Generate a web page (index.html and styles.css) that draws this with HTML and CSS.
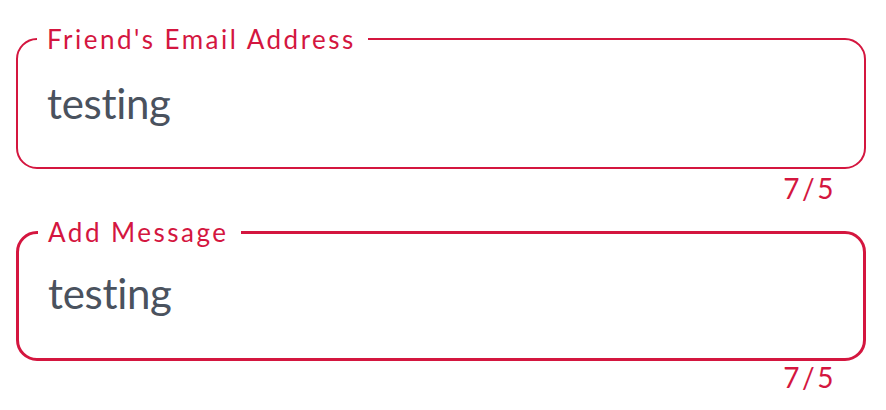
FILE: index.html
```html
<!DOCTYPE html>
<html lang="en">
<head>
<meta charset="utf-8">
<title>Invite a friend</title>
<link rel="stylesheet" href="styles.css">
</head>
<body>
<form class="form">
  <div class="field field--email">
    <fieldset class="box">
      <legend class="label">Friend's Email Address</legend>
      <div class="value">testing</div>
    </fieldset>
    <div class="counter">7/5</div>
  </div>
  <div class="field field--message">
    <fieldset class="box box--focused">
      <legend class="label">Add Message</legend>
      <div class="value">testing</div>
    </fieldset>
    <div class="counter">7/5</div>
  </div>
</form>
</body>
</html>
```
FILE: styles.css
```css
html, body {
  margin: 0;
  padding: 0;
  background: #ffffff;
}

body {
  width: 886px;
  height: 410px;
  overflow: hidden;
  font-family: Lato, "Liberation Sans", sans-serif;
}

.form {
  display: flex;
  flex-direction: column;
  padding-top: 26px;
}

.field {
  display: flex;
  flex-direction: column;
}

.field--message {
  margin-top: 15px;
}

.box {
  margin: 0 20px 0 16px;
  padding: 0 20px 39px 19px;
  border: 2px solid #d4163f;
  border-radius: 21px;
  min-width: 0;
}

.box--focused {
  border-width: 3px;
  padding-bottom: 40px;
}

.label {
  padding: 0 12px 0 10px;
  font-size: 26px;
  line-height: 26px;
  letter-spacing: 2.5px;
  color: #d4163f;
}

.value {
  margin: 26px 0 0 10px;
  font-size: 42px;
  line-height: 50px;
  letter-spacing: -0.3px;
  color: #4a525e;
}

.box--focused .value {
  margin-top: 23px;
}

.counter {
  align-self: flex-end;
  margin: 3px 50px 0 0;
  font-size: 28px;
  line-height: 32px;
  letter-spacing: 2.5px;
  color: #d4163f;
}

.field--message .counter {
  margin-top: 0;
}
```
